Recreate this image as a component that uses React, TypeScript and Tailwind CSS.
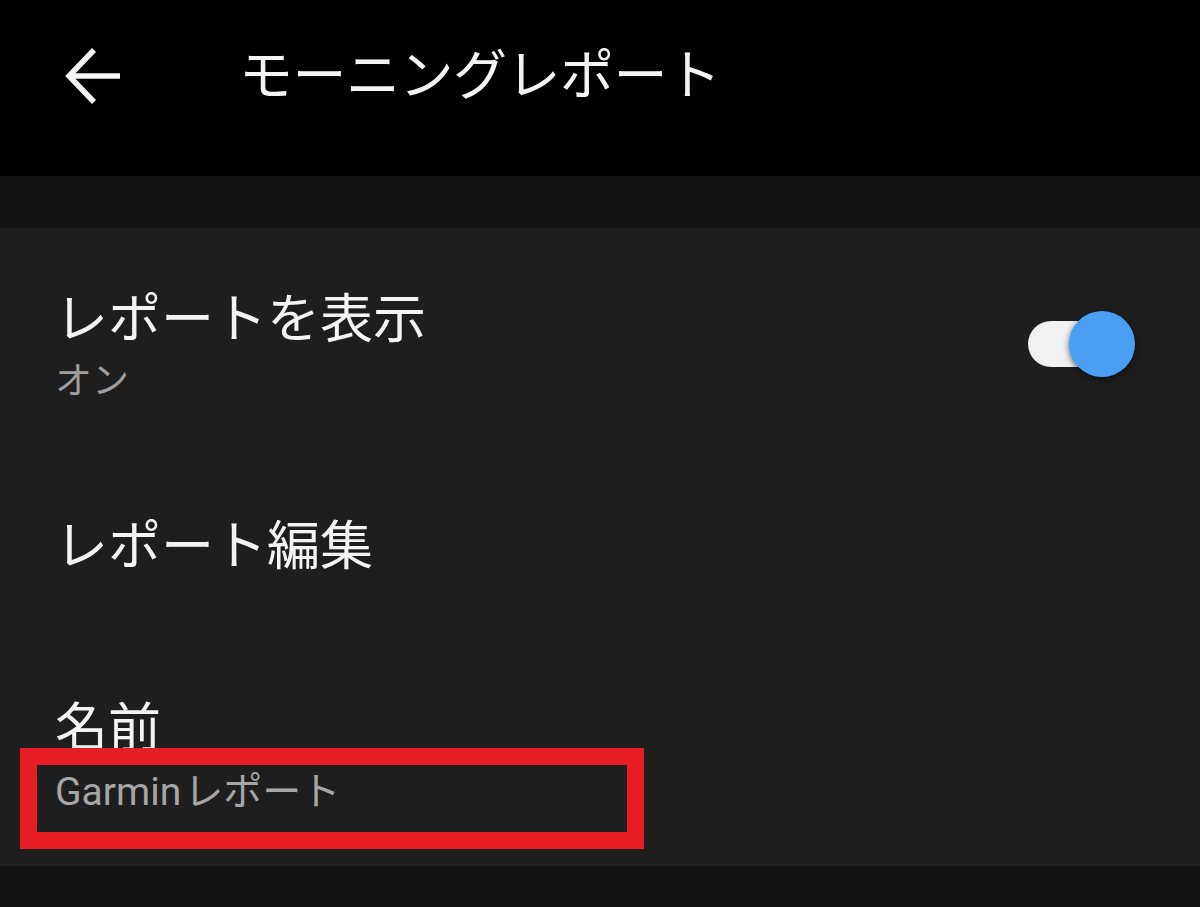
import React from 'react';

const font = { fontFamily: 'Roboto, "Noto Sans CJK JP", sans-serif' };

const BackArrow: React.FC = () => (
  <svg width="60" height="60" viewBox="0 0 60 60" fill="none" className="shrink-0">
    <path d="M4 30 H56" stroke="#f5f5f5" strokeWidth="5.5" />
    <path d="M30 4 L5 30 L30 56" stroke="#f5f5f5" strokeWidth="5.5" strokeLinejoin="miter" />
  </svg>
);

const Toggle: React.FC = () => (
  <div className="relative w-[107px] h-[66px] flex items-center">
    <div className="w-[96px] h-[46px] rounded-full bg-[#f1f1f1]" />
    <div className="absolute right-0 top-0 w-[66px] h-[66px] rounded-full bg-[#4a9ff4] shadow-[0_2px_6px_rgba(0,0,0,0.6)]" />
  </div>
);

export default function App() {
  return (
    <div className="w-[1200px] h-[907px] bg-[#121212] overflow-hidden text-[#f3f3f3]" style={font}>
      {/* Top bar */}
      <div className="h-[176px] bg-black flex items-start pt-[46px]">
        <div className="ml-[64px] w-[60px]">
          <BackArrow />
        </div>
        <h1 className="ml-[115px] text-[54px] leading-[60px] mt-[1px] tracking-[-0.5px]">モーニングレポート</h1>
      </div>

      <div className="h-[52px] bg-[#121212]" />

      {/* Settings card */}
      <div className="relative h-[638px] bg-[#1e1e1e] pl-[55px] pr-[65px]">
        <div className="flex items-start justify-between pt-[62px]">
          <div>
            <div className="text-[53px] leading-[60px]">レポートを表示</div>
            <div className="mt-[10px] text-[37px] leading-[44px] text-[#9e9e9e]">オン</div>
          </div>
          <div className="mt-[21px]">
            <Toggle />
          </div>
        </div>

        <div className="mt-[113px] text-[53px] leading-[60px]">レポート編集</div>

        <div className="mt-[122px]">
          <div className="text-[53px] leading-[60px]">名前</div>
          <div className="mt-[11px] text-[39px] leading-[44px] text-[#a6a6a6]">
            Garmin<span className="ml-[3px]">レポート</span>
          </div>
        </div>

        {/* highlight annotation */}
        <div className="absolute left-[20px] top-[520px] w-[624px] h-[101px] border-[17px] border-[#e81c24]" />
      </div>
    </div>
  );
}
